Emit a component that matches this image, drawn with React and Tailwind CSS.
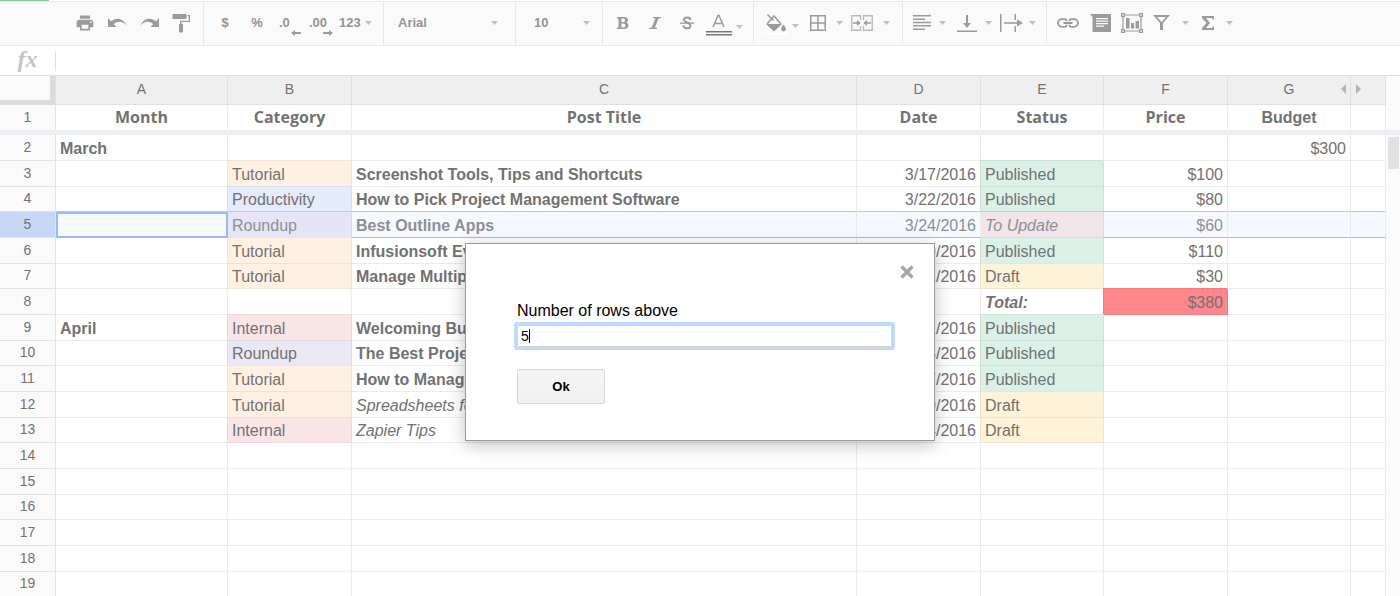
const COLUMNS = [
  { id: "A", title: "Month", width: "w-[172px]" },
  { id: "B", title: "Category", width: "w-[124px]" },
  { id: "C", title: "Post Title", width: "" },
  { id: "D", title: "Date", width: "w-[124px]" },
  { id: "E", title: "Status", width: "w-[123px]" },
  { id: "F", title: "Price", width: "w-[124px]" },
  { id: "G", title: "Budget", width: "w-[123px]" },
  { id: "H", title: "", width: "w-[35px]" },
];

const FILLS = {
  Tutorial: "bg-[#fef1e4] border-[#f0e4d9] shadow-[-1px_-1px_0_#f0e4d9]",
  Productivity: "bg-[#e4ebfb] border-[#d8dfef] shadow-[-1px_-1px_0_#d8dfef]",
  Roundup: "bg-[#ebe7f4] border-[#dedae8] shadow-[-1px_-1px_0_#dedae8]",
  Internal: "bg-[#fae5e6] border-[#edd9da] shadow-[-1px_-1px_0_#edd9da]",
  Published: "bg-[#dbf0e6] border-[#cde2d8] shadow-[-1px_-1px_0_#cde2d8]",
  Draft: "bg-[#fff3d9] border-[#f0e4cb] shadow-[-1px_-1px_0_#f0e4cb]",
  "To Update": "bg-[#f1e4ea] border-[#cde2d8]",
  $380: "bg-[#ff868b] border-[#f4787e] shadow-[-1px_-1px_0_#f4787e]",
};

const ROWS = [
  { n: 2, month: "March", budget: "$300" },
  { n: 3, category: "Tutorial", title: "Screenshot Tools, Tips and Shortcuts", date: "3/17/2016", status: "Published", price: "$100" },
  { n: 4, category: "Productivity", title: "How to Pick Project Management Software", date: "3/22/2016", status: "Published", price: "$80" },
  { n: 5, category: "Roundup", title: "Best Outline Apps", date: "3/24/2016", status: "To Update", price: "$60" },
  { n: 6, category: "Tutorial", title: "Infusionsoft Everything Guide", date: "3/29/2016", status: "Published", price: "$110" },
  { n: 7, category: "Tutorial", title: "Manage Multiple Projects", date: "3/31/2016", status: "Draft", price: "$30" },
  { n: 8, status: "Total:", price: "$380" },
  { n: 9, month: "April", category: "Internal", title: "Welcoming Bundles", date: "4/1/2016", status: "Published" },
  { n: 10, category: "Roundup", title: "The Best Project Apps", date: "4/5/2016", status: "Published" },
  { n: 11, category: "Tutorial", title: "How to Manage Teams", date: "4/7/2016", status: "Published" },
  { n: 12, category: "Tutorial", title: "Spreadsheets for Everyone", date: "4/10/2016", status: "Draft", idea: true },
  { n: 13, category: "Internal", title: "Zapier Tips", date: "4/14/2016", status: "Draft", idea: true },
  { n: 14 },
  { n: 15 },
  { n: 16 },
  { n: 17 },
  { n: 18 },
  { n: 19 },
];

const SELECTED = 5;

function Caret({ className = "" }) {
  return (
    <svg className={"h-1 w-[7px] shrink-0 fill-[#c0c0c0] " + className} viewBox="0 0 7 4">
      <path d="M0 0h7L3.500 4z" />
    </svg>
  );
}

function Tool({ label, className, children }) {
  return (
    <button type="button" aria-label={label} className={"flex h-full shrink-0 items-center pb-0.5 " + className}>
      {children}
    </button>
  );
}

function Icon({ children, className = "h-6 w-6", box = "0 0 24 24" }) {
  return (
    <svg viewBox={box} className={"shrink-0 " + className} fill="#9b9b9b">
      {children}
    </svg>
  );
}

function Group({ className, children }) {
  return <div className={"flex h-full shrink-0 items-center border-r border-[#e8e8e8] " + className}>{children}</div>;
}

function Toolbar() {
  return (
    <div className="flex h-[45px] items-center border-y border-[#e9e9e9] bg-[#fafafa] text-[13px] font-bold text-[#949494]">
      <Group className="w-[204px] pl-[69px]">
        <Tool label="Print" className="w-8 justify-center">
          <Icon className="h-5 w-5">
            <path d="M19 8H5c-1.660 0-3 1.340-3 3v6h4v4h12v-4h4v-6c0-1.660-1.340-3-3-3zm-3 11H8v-5h8v5zm3-7a1 1 0 1 1 0-2 1 1 0 0 1 0 2zM18 3H6v4h12V3z" />
          </Icon>
        </Tool>
        <Tool label="Undo" className="w-8 justify-center">
          <Icon className="h-[9px] w-[19px]" box="0 0 19 9">
            <path d="M0 0v9h8.500L5.800 6.200C9.500 2.800 14.500 3 18.600 7.500 15.500.5 8.500-1.500 3 3.200z" />
          </Icon>
        </Tool>
        <Tool label="Redo" className="w-8 justify-center">
          <Icon className="h-[9px] w-[19px]" box="0 0 19 9">
            <path d="M19 0v9h-8.500l2.700-2.800C9.500 2.800 4.500 3 .4 7.500 3.500.5 10.500-1.500 16 3.200z" />
          </Icon>
        </Tool>
        <Tool label="Paint format" className="w-8 justify-center">
          <Icon className="h-5 w-[18px]" box="0 0 18 20">
            <path d="M.5 1h14v5H.5zM15.500 2H18v7H9.500v2H11v7.500a1 1 0 0 1-1 1H8a1 1 0 0 1-1-1V11h1V7.700h8.700V3.200h-1.200z" />
          </Icon>
        </Tool>
      </Group>
      <Group className="w-[180px] pl-[5px]">
        <Tool label="Format as currency" className="w-8 justify-center">$</Tool>
        <Tool label="Format as percent" className="w-8 justify-center">%</Tool>
        <Tool label="Decrease decimal places" className="relative w-8 pl-1.5">
          .0
          <Icon className="absolute right-1 bottom-[9px] h-1.5 w-2.5" box="0 0 10 6">
            <path d="M0 3l4-3v2h6v2H4v2z" />
          </Icon>
        </Tool>
        <Tool label="Increase decimal places" className="relative w-8 pl-1">
          .00
          <Icon className="absolute right-1 bottom-[9px] h-1.5 w-2.5" box="0 0 10 6">
            <path d="M10 3L6 0v2H0v2h6v2z" />
          </Icon>
        </Tool>
        <Tool label="More formats" className="gap-1 pl-[2px]">
          123 <Caret />
        </Tool>
      </Group>
      <Group className="w-[132px]">
        <Tool label="Font" className="w-full justify-between pr-[17px] pl-3.5">
          Arial <Caret />
        </Tool>
      </Group>
      <Group className="w-[87px]">
        <Tool label="Font size" className="w-full justify-between pr-3 pl-[18px]">
          10 <Caret />
        </Tool>
      </Group>
      <Group className="w-[151px] pl-1">
        <Tool label="Bold" className="w-8 justify-center">
          <Icon className="h-3 w-3" box="0 0 12 12">
            <path d="M0 0h6.500C10 0 11 1.300 11 3c0 1.300-.7 2.200-2 2.600 1.700.3 2.500 1.400 2.500 3C11.500 11 9.800 12 7 12H0v-1.500h1.500v-9H0zm4.500 1.500v3.500h1.500C7.400 5 8 4.400 8 3.200S7.400 1.500 6 1.500zm0 5v4h1.700c1.500 0 2.100-.7 2.100-2s-.7-2-2.100-2z" />
          </Icon>
        </Tool>
        <Tool label="Italic" className="w-8 justify-center">
          <Icon className="h-3 w-3" box="0 0 12 12">
            <path d="M4 0h8v1.200H9.700L5.800 10.800H8V12H0v-1.200h2.500L6.500 1.200H4z" />
          </Icon>
        </Tool>
        <Tool label="Strikethrough" className="w-8 justify-center">
          <Icon className="h-4 w-4" box="0 0 16 16">
            <path d="M1 7.500h14v1.300H1z" />
            <path d="M11.500 5C11.300 3.300 10 2.500 8.200 2.500 6.200 2.500 5 3.300 5 4.700c0 3.300 6.500 2.300 6.500 6 0 1.700-1.400 2.600-3.400 2.600-2.200 0-3.500-.9-3.800-2.800" fill="none" stroke="#9b9b9b" strokeWidth="2" />
          </Icon>
        </Tool>
        <Tool label="Text color" className="gap-1 pt-1 pl-[3px]">
          <Icon className="h-[22px] w-[26px]" box="0 0 26 22">
            <path d="M7 13L12 1.500h1L18 13M9 9.500h7" fill="none" stroke="#9b9b9b" strokeWidth="1.500" />
            <path d="M0 17h26v1.500H0zM0 20h26v1.500H0z" fill="#777" />
          </Icon>
          <Caret className="mt-1" />
        </Tool>
      </Group>
      <Group className="w-[149px] pl-2">
        <Tool label="Fill color" className="w-12 gap-1 pt-0.5">
          <Icon className="h-[22px] w-[26px]" box="0 0 26 22">
            <path d="M0 19.500h26V22H0z" fill="#fff" />
            <path d="M4 11h16l-8 7.500zM21.500 11.500c1.800 2.500 2.400 3.500 2.400 4.500a2.400 2.400 0 0 1-4.800 0c0-1 .6-2 2.400-4.500z" />
            <path d="M5.500 1.500l6 6M5 11l7-8 7 8" fill="none" stroke="#9b9b9b" strokeWidth="1.500" />
          </Icon>
          <Caret className="mt-1" />
        </Tool>
        <Tool label="Borders" className="w-[41px] gap-2.5">
          <Icon className="h-4 w-4" box="0 0 16 16">
            <path d="M.75.75h14.500v14.500H.75zM8 1v14M1 8h14" fill="none" stroke="#9b9b9b" strokeWidth="1.500" />
          </Icon>
          <Caret />
        </Tool>
        <Tool label="Merge cells" className="gap-2.5">
          <Icon className="h-4 w-[22px]" box="0 0 22 16">
            <path d="M9.500 5V.75H.75v14.500H9.500V11M12.500 5V.75h8.750v14.500H12.500V11" fill="none" stroke="#b8b8b8" strokeWidth="1.300" />
            <path d="M2 7.200h4V5l3.700 3L6 11V8.800H2zM20 7.200h-4V5l-3.700 3 3.700 3V8.800h4z" />
          </Icon>
          <Caret />
        </Tool>
      </Group>
      <Group className="w-[144px] pl-2.5">
        <Tool label="Horizontal align" className="w-11 gap-2">
          <Icon className="h-[15px] w-[18px]" box="0 0 18 15">
            <path d="M0 0h18v1.500H0zM0 3.400h12v1.500H0zM0 6.700h18v1.500H0zM0 10.100h18v1.500H0zM0 13.500h12V15H0z" />
          </Icon>
          <Caret />
        </Tool>
        <Tool label="Vertical align" className="w-[43px] gap-2">
          <Icon className="h-[18px] w-5" box="0 0 20 18">
            <path d="M9 1h2v8h3l-4 5-4-5h3zM0 16.500h20V18H0z" />
          </Icon>
          <Caret />
        </Tool>
        <Tool label="Text wrapping" className="gap-1.5">
          <Icon className="h-[18px] w-[23px]" box="0 0 23 18">
            <path d="M0 0h1.500v18H0zM4 8.200h13V5.500l6 3.500-6 3.500V9.800H4zM14.500 0H16v6h-1.500zM14.500 12H16v6h-1.500z" />
          </Icon>
          <Caret />
        </Tool>
      </Group>
      <div className="flex h-full items-center pl-2.5">
        <Tool label="Insert link" className="w-[22px]">
          <Icon className="h-[10px] w-[22px]" box="0 0 22 10">
            <path d="M9.500 3.300V3c0-1-.8-1.800-1.800-1.800H4.800a3.800 3.800 0 0 0 0 7.600h2.900c1 0 1.800-.8 1.800-1.800v-.3M12.500 3.300V3c0-1 .8-1.800 1.800-1.800h2.900a3.800 3.800 0 0 1 0 7.600h-2.900c-1 0-1.800-.8-1.800-1.800v-.3M6.500 5h9" fill="none" stroke="#9b9b9b" strokeWidth="1.800" />
          </Icon>
        </Tool>
        <Tool label="Insert comment" className="w-[42px] justify-center">
          <Icon className="h-[18px] w-[21px]" box="0 0 21 18">
            <path d="M0 0h21v18H2.500V3z" />
            <path d="M6 4h12v1.300H6zM6 6.500h12v1.300H6zM6 9h12v1.300H6zM6 11.500h8v1.300H6z" fill="#fafafa" />
          </Icon>
        </Tool>
        <Tool label="Insert chart" className="w-[22px]">
          <Icon className="h-5 w-[22px]" box="0 0 22 20">
            <path d="M2 2h18v16H2z" fill="none" stroke="#9b9b9b" strokeWidth="1.200" />
            <path d="M.6.6h2.800v2.800H.6zM18.600.6h2.800v2.800h-2.800zM.6 16.600h2.800v2.800H.6zM18.600 16.600h2.800v2.800h-2.800z" fill="#fafafa" stroke="#9b9b9b" strokeWidth="1.200" />
            <path d="M5 5h3.500v10.500H5zM10 10h3v5.500h-3zM14.500 8H18v7.500h-3.500z" />
          </Icon>
        </Tool>
        <Tool label="Filter" className="w-[48px] gap-3 pl-2.5">
          <Icon className="h-[15px] w-[17px]" box="0 0 17 15">
            <path d="M0 0h17l-7 8v7H7V8zM4 2l4.500 5L13 2z" fillRule="evenodd" />
          </Icon>
          <Caret />
        </Tool>
        <Tool label="Functions" className="gap-3 pl-[11px]">
          <Icon className="h-[14px] w-3" box="0 0 12 14">
            <path d="M0 0h12v3.500h-1.500V2H4l4 5-4 5h6.500v-1.500H12V14H0v-2l4.500-5L0 2z" />
          </Icon>
          <Caret />
        </Tool>
      </div>
    </div>
  );
}

function FormulaBar() {
  return (
    <div className="flex h-[29px] items-center bg-white">
      <label
        htmlFor="formula"
        className="w-[55px] pb-1 text-center font-['Liberation_Serif',serif] text-2xl leading-none font-bold text-[#c4c4c4] italic"
      >
        fx
      </label>
      <input id="formula" className="h-5 flex-1 border-l border-[#e0e0e0] px-2 outline-none" />
    </div>
  );
}

function Cell({ row, value = "", className = "" }) {
  const selected = row.n === SELECTED;
  let look = FILLS[value] || "border-[#ebebeb]";
  if (selected && !FILLS[value]) look += " bg-[#f6f9ff]";
  if (selected && value === "Roundup") look = "bg-[#e5e5f5] border-[#d8d9ea]";
  if (selected) look += " text-[#8e9094] border-b-[#9fbdf3]";
  if (row.n === SELECTED - 1) look += " border-b-[#b3cdf8]";
  return (
    <td className={"overflow-hidden border-r border-b px-1 pt-0.5 pb-0 whitespace-nowrap " + look + " " + className}>
      {value}
    </td>
  );
}

function Row({ row, index }) {
  const selected = row.n === SELECTED;
  return (
    <tr className={index % 3 === 2 ? "h-[25px]" : "h-[26px]"}>
      <th
        scope="row"
        className={
          "border-r border-b border-[#e2e2e2] px-0 pt-0 pb-0.5 text-center text-sm leading-5 font-normal " +
          (selected ? "bg-[#c5d7f5]" : "bg-[#fafafa]")
        }
      >
        {row.n}
      </th>
      <Cell
        row={row}
        value={row.month}
        className={"font-bold" + (selected ? " outline-2 -outline-offset-2 outline-[#98bbf7]" : "")}
      />
      <Cell row={row} value={row.category} />
      <Cell row={row} value={row.title} className={row.idea ? "italic" : "font-bold"} />
      <Cell row={row} value={row.date} className="text-right" />
      <Cell
        row={row}
        value={row.status}
        className={row.status === "Total:" ? "font-bold italic" : row.status === "To Update" ? "italic" : ""}
      />
      <Cell row={row} value={row.price} className="text-right" />
      <Cell row={row} value={row.budget} className="text-right" />
      <Cell row={row} />
    </tr>
  );
}

function ColumnLabel({ id }) {
  if (id === "G") {
    return (
      <div className="grid grid-cols-[1fr_auto_1fr] items-center">
        <span className="col-start-2">G</span>
        <svg className="mr-1 h-2.5 w-[5px] justify-self-end fill-[#b4b4b4]" viewBox="0 0 5 10">
          <path d="M5 0v10L0 5z" />
        </svg>
      </div>
    );
  }
  if (id === "H") {
    return (
      <svg className="ml-[5px] h-2.5 w-[5px] fill-[#b4b4b4]" viewBox="0 0 5 10">
        <path d="M0 0v10l5-5z" />
      </svg>
    );
  }
  return id;
}

function Sheet() {
  return (
    <div className="flex">
      <table className="min-w-0 flex-1 table-fixed border-separate border-spacing-0 text-base leading-5 text-[#727272]">
        <colgroup>
          <col className="w-14" />
          {COLUMNS.map((column) => (
            <col key={column.id} className={column.width} />
          ))}
        </colgroup>
        <thead>
          <tr className="h-[30px]">
            <td className="border-t border-r border-t-[#dcdcdc] border-r-[#e2e2e2] bg-[#fafafa] p-0 shadow-[inset_-5px_-5px_0_#dcdcdc]" />
            {COLUMNS.map((column) => (
              <th
                key={column.id}
                scope="col"
                className="border-t border-r border-b border-[#e0e0e0] border-t-[#dcdcdc] bg-[#efefef] px-0 pt-0 pb-0.5 text-sm leading-5 font-normal"
              >
                <ColumnLabel id={column.id} />
              </th>
            ))}
          </tr>
          <tr className="h-[25px]">
            <th scope="row" className="border-r border-[#e2e2e2] bg-[#fafafa] px-0 pt-0 pb-0.5 text-sm leading-5 font-normal">
              1
            </th>
            {COLUMNS.map((column) => (
              <td
                key={column.id}
                className={
                  "border-r border-[#ebebeb] px-0 pt-0 text-center font-bold " +
                  (column.id === "G" ? "pb-0" : "pb-0.5 font-['Open_Sans',sans-serif]")
                }
              >
                {column.title}
              </td>
            ))}
          </tr>
          <tr className="h-[5px]">
            <td colSpan={9} className="bg-[#ebeff3] p-0" />
          </tr>
        </thead>
        <tbody>
          {ROWS.map((row, i) => (
            <Row key={row.n} row={row} index={i} />
          ))}
        </tbody>
      </table>
      <div className="flex w-[14px] flex-col bg-[#fbfbfb]">
        <div className="h-[55px] border-t border-[#dcdcdc]" />
        <div className="h-[5px] bg-[#ebeff3]" />
        <div className="mr-px ml-0.5 mt-0.5 h-8 bg-[#e2e2e2]" />
      </div>
    </div>
  );
}

function RowsDialog() {
  return (
    <form
      role="dialog"
      aria-label="Number of rows above"
      onSubmit={(e) => e.preventDefault()}
      className="absolute top-[243px] left-1/2 flex w-[470px] -translate-x-1/2 flex-col items-start border border-[#999] bg-white pt-[19px] pr-[42px] pb-9 pl-[51px] text-black shadow-[0_4px_16px_rgba(0,0,0,0.25)]"
    >
      <button type="button" aria-label="Close" className="-mr-6 self-end p-0.5">
        <svg className="h-3.5 w-3.5" viewBox="0 0 14 14" fill="none" stroke="#a6a6a6" strokeWidth="3.200">
          <path d="M1.500 1.500l11 11M12.500 1.500l-11 11" />
        </svg>
      </button>
      <label htmlFor="rows" className="mt-5 text-base leading-5">
        Number of rows above
      </label>
      <div className="relative mt-1 w-full">
        <input
          id="rows"
          defaultValue="5"
          className="block h-[22px] w-full rounded-[1px] border border-[#d5d5d5] px-[3px] text-sm ring-3 ring-[#bddcfd] outline-none"
        />
        <span className="absolute top-1 left-3 h-3.5 w-px bg-black" />
      </div>
      <button
        type="submit"
        className="mt-[22px] h-[35px] w-[88px] rounded-[2px] border border-[#d8d8d8] bg-linear-to-b from-[#f5f5f5] to-[#f1f1f1] text-[13px] font-bold"
      >
        Ok
      </button>
    </form>
  );
}

export default function App() {
  return (
    <div className="relative h-screen overflow-hidden bg-white font-['Liberation_Sans',Arial,sans-serif]">
      <div className="h-px w-[49px] bg-[#7fcfa3]" />
      <Toolbar />
      <FormulaBar />
      <Sheet />
      <RowsDialog />
    </div>
  );
}
